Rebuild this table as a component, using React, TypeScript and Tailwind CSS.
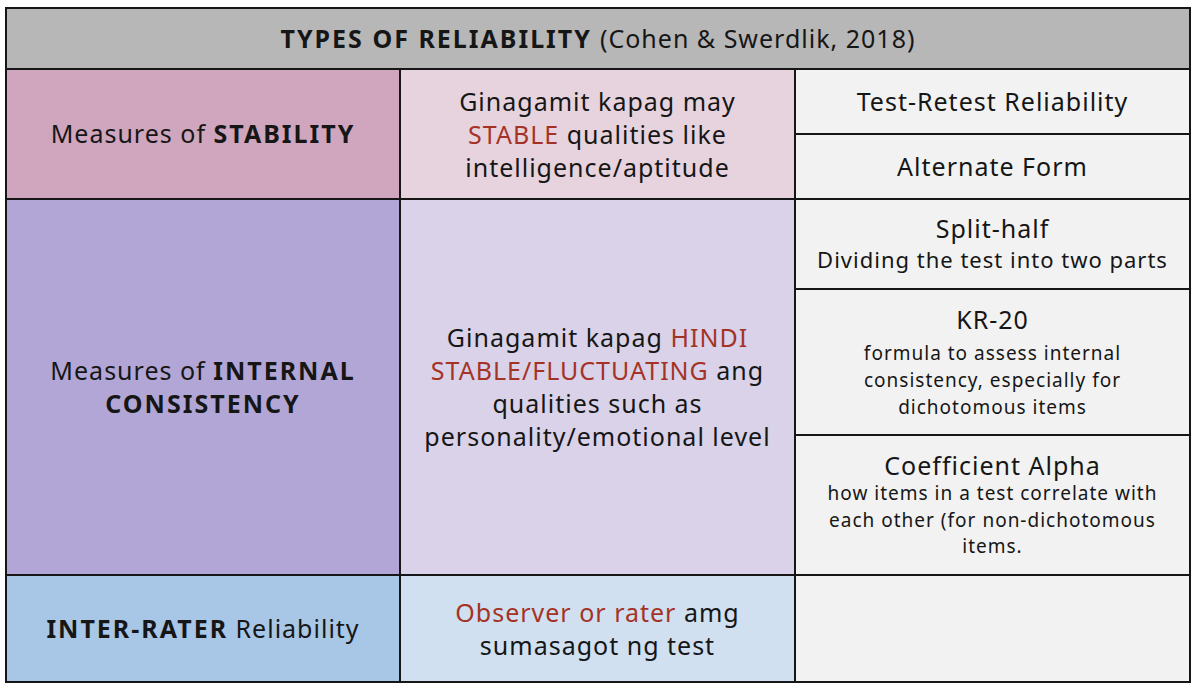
import React from "react";

const font = { fontFamily: '"Noto Sans", "Liberation Sans", sans-serif' };

function Red({ children }: { children: React.ReactNode }) {
  return <span className="text-[#a53325]">{children}</span>;
}

function B({ children }: { children: React.ReactNode }) {
  return <span className="font-bold tracking-[2px]">{children}</span>;
}

export default function App() {
  return (
    <div className="w-[1200px] h-[696px] bg-white pt-[7px] pl-[5px] text-[#161616] tracking-[1px]" style={font}>
      <div className="w-[1186px] border-2 border-[#161616] flex flex-col">
        {/* Header */}
        <div className="h-[61px] border-b-2 border-[#161616] bg-[#b7b7b7] flex items-center justify-center text-[25px] leading-none">
          <B>TYPES OF RELIABILITY</B>
          <span className="ml-[8px]">(Cohen &amp; Swerdlik, 2018)</span>
        </div>

        {/* Row 1: Stability */}
        <div className="h-[130px] border-b-2 border-[#161616] flex">
          <div className="w-[394px] border-r-2 border-[#161616] bg-[#cfa6bd] flex items-center justify-center text-[25px]">
            <span>
              Measures of <B>STABILITY</B>
            </span>
          </div>
          <div className="w-[395px] border-r-2 border-[#161616] bg-[#e7d3de] flex items-center justify-center text-center text-[25px] leading-[33px]">
            <p>
              Ginagamit kapag may
              <br />
              <Red>STABLE</Red> qualities like
              <br />
              intelligence/aptitude
            </p>
          </div>
          <div className="flex-1 flex flex-col bg-[#f2f2f2] text-[25px]">
            <div className="h-[65px] border-b-2 border-[#161616] flex items-center justify-center">
              Test-Retest Reliability
            </div>
            <div className="flex-1 flex items-center justify-center">Alternate Form</div>
          </div>
        </div>

        {/* Row 2: Internal consistency */}
        <div className="h-[376px] border-b-2 border-[#161616] flex">
          <div className="w-[394px] border-r-2 border-[#161616] bg-[#b1a6d5] flex items-center justify-center text-center text-[25px] leading-[33px]">
            <p>
              Measures of <B>INTERNAL</B>
              <br />
              <B>CONSISTENCY</B>
            </p>
          </div>
          <div className="w-[395px] border-r-2 border-[#161616] bg-[#d9d2e9] flex items-center justify-center text-center text-[25px] leading-[33px]">
            <p>
              Ginagamit kapag <Red>HINDI</Red>
              <br />
              <Red>STABLE/FLUCTUATING</Red> ang
              <br />
              qualities such as
              <br />
              personality/emotional level
            </p>
          </div>
          <div className="flex-1 flex flex-col bg-[#f2f2f2] text-center">
            <div className="h-[90px] border-b-2 border-[#161616] flex flex-col items-center justify-center">
              <div className="text-[25px] leading-[31px]">Split-half</div>
              <div className="text-[22px] leading-[31px]">Dividing the test into two parts</div>
            </div>
            <div className="h-[146px] border-b-2 border-[#161616] flex flex-col items-center justify-center">
              <div className="text-[25px] leading-[30px] mb-[6px]">KR-20</div>
              <div className="text-[19px] leading-[27px]">
                formula to assess internal
                <br />
                consistency, especially for
                <br />
                dichotomous items
              </div>
            </div>
            <div className="flex-1 flex flex-col items-center justify-center">
              <div className="text-[25px] leading-[30px]">Coefficient Alpha</div>
              <div className="text-[19px] leading-[26.5px]">
                how items in a test correlate with
                <br />
                each other (for non-dichotomous
                <br />
                items.
              </div>
            </div>
          </div>
        </div>

        {/* Row 3: Inter-rater */}
        <div className="h-[105px] flex">
          <div className="w-[394px] border-r-2 border-[#161616] bg-[#a8c6e6] flex items-center justify-center text-[25px]">
            <span>
              <B>INTER-RATER</B> Reliability
            </span>
          </div>
          <div className="w-[395px] border-r-2 border-[#161616] bg-[#d0e0f1] flex items-center justify-center text-center text-[25px] leading-[33px]">
            <p>
              <Red>Observer or rater</Red> amg
              <br />
              sumasagot ng test
            </p>
          </div>
          <div className="flex-1 bg-[#f2f2f2]" />
        </div>
      </div>
    </div>
  );
}
